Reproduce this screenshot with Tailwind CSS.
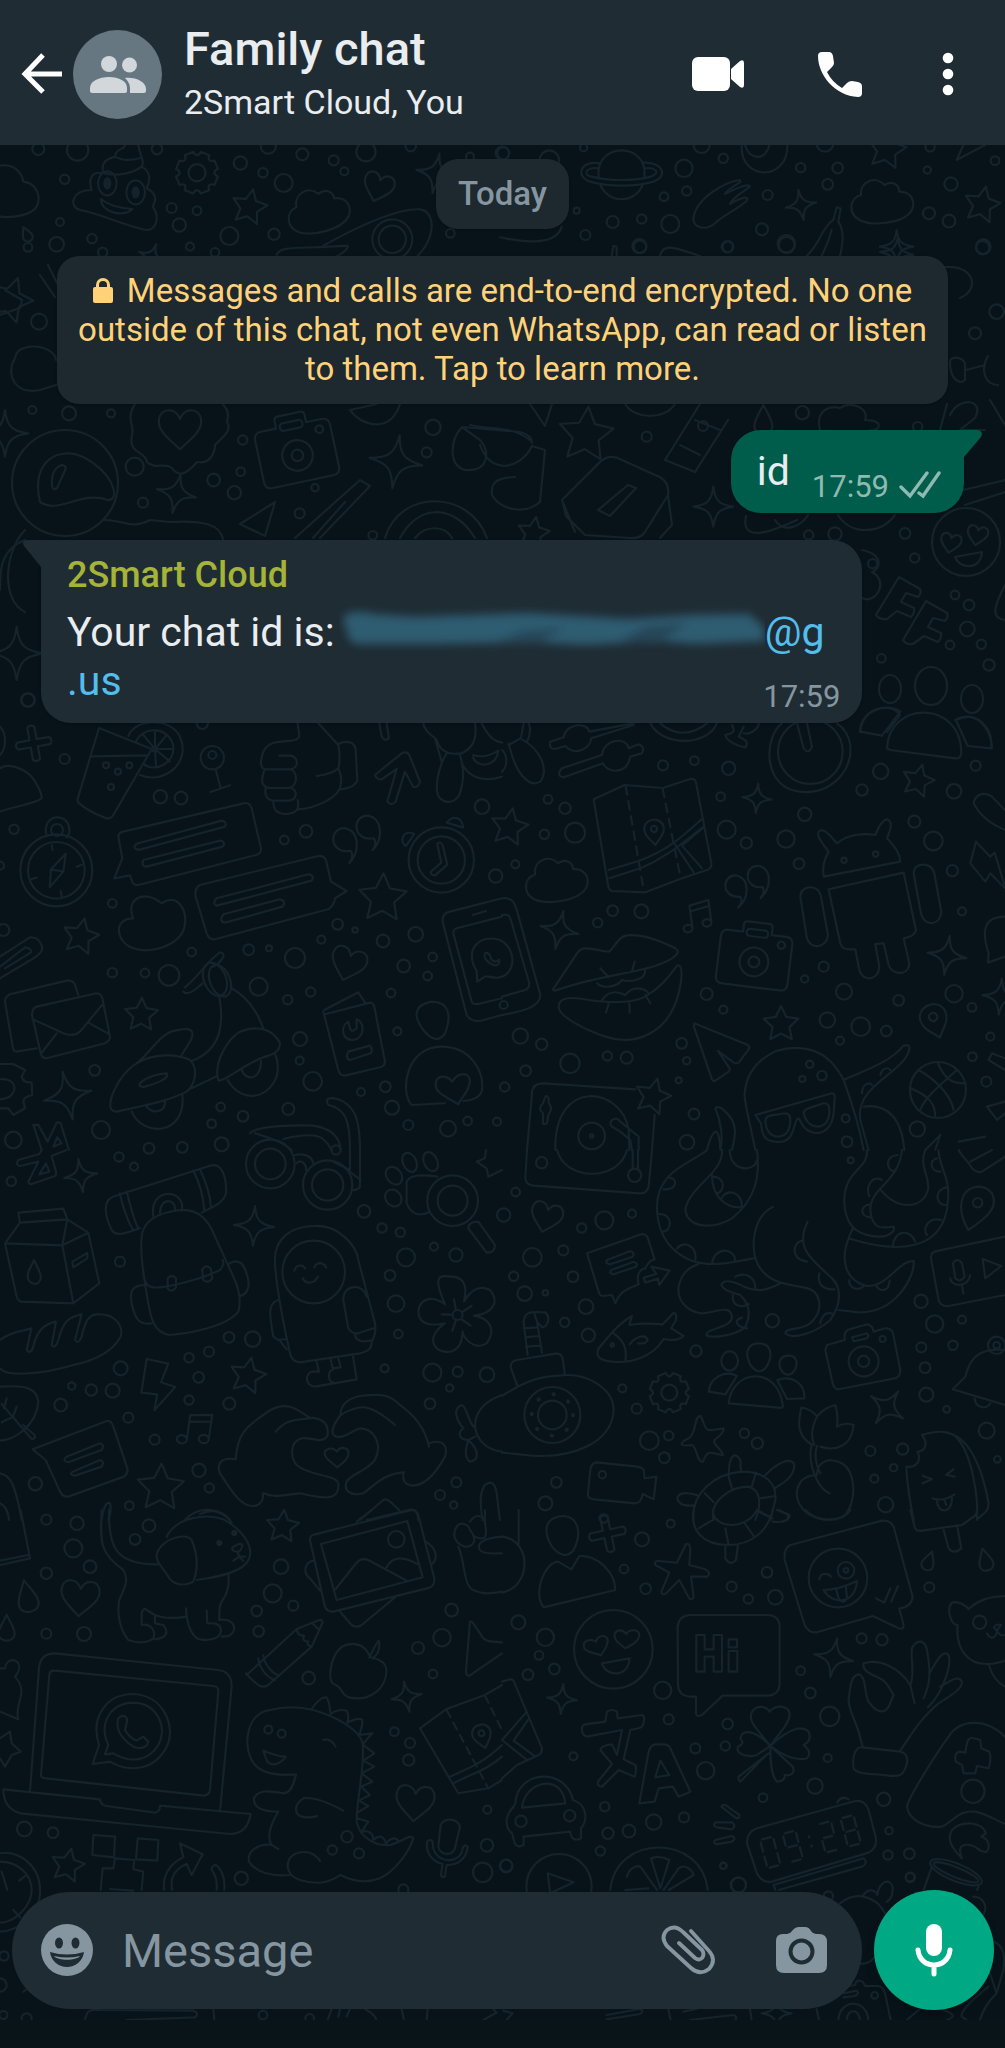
<!DOCTYPE html>
<html lang="en">
<head>
    <meta charset="UTF-8">
    <meta name="viewport" content="width=device-width, initial-scale=1.0">
    <title>Family chat</title>
    <script src="https://cdn.jsdelivr.net/npm/@tailwindcss/browser@4"></script>
</head>
<body class="bg-[#091419] font-['Roboto',sans-serif] text-[#e9edef]">

<div class="min-h-screen flex flex-col pb-7">

    <header class="relative z-10 flex items-center h-[145px] pt-[3px] pl-[19px] pr-[47px] bg-[#1f2c34]">
        <button type="button" aria-label="Back" class="shrink-0">
            <svg class="w-[46px] h-[46px]" viewBox="0 0 46 46" fill="none" stroke="#fff" stroke-width="5"><path d="M43 23H7M24 4 6 23l18 18"/></svg>
        </button>
        <span class="shrink-0 ml-2 w-[89px] h-[89px] rounded-full bg-[#667781] flex items-center justify-center">
            <svg class="w-[58px] h-[42px]" viewBox="0 0 58 42" fill="#d1d7db">
                <circle cx="20" cy="11" r="8"/><circle cx="40.500" cy="12" r="7.500"/>
                <path d="M1 35C1 28 10 24 20 24s18 4 18 11v3c0 1-1 2-2 2H3c-1 0-2-1-2-2z"/>
                <path d="M36 25c11-1 21 4 21 11v2c0 1-1 2-2 2H41V35c0-4-2-7-5-10z"/>
            </svg>
        </span>
        <div class="flex-1 min-w-0 pl-[22px]">
            <h1 class="text-[47px] leading-[56px] font-medium truncate">Family chat</h1>
            <p class="text-[34px] leading-[50px] truncate">2Smart Cloud, You</p>
        </div>
        <nav class="flex items-center shrink-0">
            <button type="button" aria-label="Video call">
                <svg class="w-[54px] h-[36px]" viewBox="0 0 54 36" fill="#fff"><rect x="1" y="1" width="38" height="34" rx="6"/><path d="M40 13 49 5q4-2 4 2v22q0 4-4 2l-9-8z"/></svg>
            </button>
            <button type="button" aria-label="Voice call" class="ml-[72px]">
                <svg class="w-[46px] h-[46px]" viewBox="0 0 46 46" fill="#fff"><path d="M5 1H12q3 0 4 4l1 7q0 2-2 4l-5 5q5 10 15 16l5-5q2-2 5-2l6 1q4 1 4 4v7q0 4-4 4C18 45 1 24 1 5q0-4 4-4z"/></svg>
            </button>
            <button type="button" aria-label="More options" class="ml-[75px]">
                <svg class="w-[20px] h-[46px]" viewBox="0 0 20 46" fill="#fff"><circle cx="10" cy="7" r="5.300"/><circle cx="10" cy="23" r="5.300"/><circle cx="10" cy="39" r="5.300"/></svg>
            </button>
        </nav>
    </header>

    <div class="relative flex-1 flex flex-col overflow-hidden bg-[#071318]">

        <!-- doodle wallpaper -->
        <svg class="absolute inset-x-0 top-0 w-full" viewBox="0 145 1005 1875" fill="none" stroke="#15232a" stroke-width="2.200" stroke-linecap="round" stroke-linejoin="round" aria-hidden="true">
            <defs>
                <path id="star" vector-effect="non-scaling-stroke" d="M0-10 2.800-4.100 9.500-3.100 4.600 1.500 5.900 8.100 0 5-5.900 8.100-4.600 1.500-9.500-3.100-2.800-4.100z"/>
                <path id="sparkle" vector-effect="non-scaling-stroke" d="M0-10C.8-3 3-1 10 0 3 1 1 3 0 10-1 3-3 1-10 0-3-1-.8-3 0-10z"/>
                <path id="heart" vector-effect="non-scaling-stroke" d="M0 9C-4 5-10 1-9-4-8-9-2-9 0-4 2-9 8-9 9-4 10 1 4 5 0 9z"/>
                <path id="cloud" vector-effect="non-scaling-stroke" d="M-13-4C-14-12-4-16 1-10 6-13 10-10 10-6 18-6 20 1 17 6 12 13-6 15-14 11-21 7-20-2-13-4z"/>
                <path id="gear" vector-effect="non-scaling-stroke" d="M1.800-9.800 5.700-8.200Q4.600-4.600 8.200-5.700L9.800-1.800Q6.500 0 9.800 1.800L8.200 5.700Q4.600 4.600 5.700 8.200L1.800 9.800Q0 6.500-1.800 9.800L-5.700 8.200Q-4.600 4.600-8.200 5.700L-9.800 1.800Q-6.500 0-9.800-1.800L-8.200-5.700Q-4.600-4.600-5.700-8.200L-1.800-9.800Q0-6.500 1.800-9.800zM4 0A4 4 0 1 1-4 0 4 4 0 1 1 4 0z"/>
                <path id="drop" vector-effect="non-scaling-stroke" d="M0-10C3-4 6 0 6 4 6 11-6 11-6 4-6 0-3-4 0-10z"/>
                <path id="camera" vector-effect="non-scaling-stroke" d="M-8-7H-4V-9Q-4-10-3-10H3Q4-10 4-9V-7H8Q10-7 10-5V6Q10 8 8 8H-8Q-10 8-10 6V-5Q-10-7-8-7zM4 1A4 4 0 1 1-4 1 4 4 0 1 1 4 1zM1.500 1A1.500 1.500 0 1 1-1.500 1 1.500 1.500 0 1 1 1.500 1zM8-4.500A1 1 0 1 1 6-4.500 1 1 0 1 1 8-4.500zM-2-8H2Q3-8 3-7T2-6H-2Q-3-6-3-7T-2-8z"/>
                <path id="plus" vector-effect="non-scaling-stroke" d="M-2-9Q0-11 2-9V-2H9Q11 0 9 2H2V9Q0 11-2 9V2H-9Q-11 0-9-2H-2z"/>
                <path id="note" vector-effect="non-scaling-stroke" d="M-4 7V-8L9-10V5M-4-4 9-6M-4 7A3 2.500 0 1 1-10 7 3 2.500 0 1 1-4 7zM9 5A3 2.500 0 1 1 3 5 3 2.500 0 1 1 9 5z"/>
                <path id="quote" vector-effect="non-scaling-stroke" d="M-5 9C-2 6-2 4-3 2-16 2-14-14-4-12 4-9 3 3-5 9zM10 4C13 1 13-1 12-3-1-3 1-19 11-17 19-14 18-2 10 4z"/>
                <path id="pin" vector-effect="non-scaling-stroke" d="M0 10C-4 5-8 2-8-3-8-13 8-13 8-3 8 2 4 5 0 10zM2.500-3A2.500 2.500 0 1 1-2.500-3 2.500 2.500 0 1 1 2.500-3z"/>
            </defs>

            <!-- top left: cloud, swirl face, avocado -->
            <g transform="scale(.3333)" stroke-width="6.500">
                <path d="M0 497C40 490 65 515 70 545 110 550 125 590 110 620 95 645 40 655 0 650M275 570C260 520 290 515 310 520 300 480 330 475 345 470 345 445 375 450 375 435M415 435C420 470 435 480 425 500 455 515 450 545 440 565 470 580 470 600 458 620 480 650 470 690 440 690 380 680 300 640 240 630 205 620 215 570 275 570M345 470C370 485 400 480 421 474M310 520C350 530 400 520 425 500M303 597C330 620 370 625 397 627 370 655 300 635 303 597z"/>
                <ellipse cx="322" cy="550" rx="28" ry="36"/><ellipse cx="407" cy="577" rx="28" ry="36"/><ellipse cx="322" cy="550" rx="9" ry="15" fill="#14222a"/><ellipse cx="407" cy="577" rx="9" ry="15" fill="#14222a"/>
                <path d="M830 765C840 735 900 748 1042 737 1050 745 1020 765 1000 775M970 737C1100 665 1200 625 1260 628 1310 635 1310 720 1240 780"/>
                <circle cx="1177" cy="718" r="60"/><circle cx="1177" cy="718" r="41"/>
            </g>

            <!-- top right: planet, comet, banana -->
            <g transform="translate(500 0) scale(.3333)" stroke-width="6.500">
                <path d="M296 530C285 425 445 425 433 530M300 552C325 615 405 610 428 555M300 490C240 480 225 530 270 545 330 562 410 560 460 545 505 530 490 485 430 488M296 505C260 500 245 525 275 530 330 545 410 542 452 530 485 520 465 500 434 505M725 435C720 545 865 545 862 435M735 435C750 485 800 480 808 435M720 540C680 545 590 590 580 655 580 685 620 695 650 665 680 640 700 635 738 605 750 590 735 585 690 612 695 595 730 575 750 560 748 550 720 560 675 582 680 570 710 555 722 545M1370 480 1390 435M1370 480 1455 435M920 768C965 725 960 690 1000 660L1010 622 1022 626 1015 665C1032 690 1030 730 1020 768M995 690C985 730 975 745 965 768M480 768C490 725 530 745 600 768M335 768 340 738 350 740 350 768M0 712C80 730 170 735 185 680"/>
            </g>

            <!-- flower badge, astronaut, shades, phones -->
            <g transform="translate(0 240)" stroke-width="2.200">
                <path d="M135 164C125 180 135 185 132 195 128 215 145 210 147 222 155 230 165 222 172 228 180 240 190 230 197 222 210 225 215 212 215 205 225 195 232 190 227 182 230 170 225 168 223 164"/>
                <path d="M400 164C390 195 360 185 350 170L377 164M530 164 545 186 552 164M625 164C635 180 665 180 675 164"/>
                <circle cx="65" cy="243" r="53"/><path d="M40 262C30 220 60 205 85 218 115 235 120 260 108 260 80 250 60 275 40 262zM52 240C52 230 62 220 66 228L57 248Q51 252 52 240zM105 280C125 280 130 290 150 280L170 282C205 280 220 285 223 299M25 290C5 310 0 360 25 372M240 284 275 262 265 296z"/>
                <path d="M462 187C450 200 448 225 465 230 490 232 490 210 480 200zM462 187 520 192Q532 195 532 203M470 185C490 190 510 185 530 200M480 205C490 235 520 230 532 206L545 210 540 262C525 275 500 270 492 255 490 240 500 238 515 237M295 298 360 240 370 246 320 298M313 298 345 262"/>
                <path d="M385 298C400 248 470 250 487 298M400 298C420 262 455 265 475 298M415 298C425 285 445 285 452 298"/>
                <path d="M562 260 600 222Q610 213 622 220L655 235Q670 240 668 255L645 292Q640 299 630 298L585 295 566 276zM598 270 628 245 636 248 610 276zM562 260 575 292M668 255 672 285 660 298"/>
                <path d="M700 164 665 220 695 232 728 180M695 180 720 190M680 205 700 215"/><circle cx="703" cy="186" r="5"/>
                <path d="M820 190C815 170 830 165 840 168 850 160 870 168 865 180 885 180 880 192 870 190M950 175C960 155 985 160 975 178L960 190H985M990 160 1005 185M955 252 1005 240M965 265 1005 252M25 300C0 310 0 330 0 350"/>
                <path d="M40 35 55 57M48 25 58 45M945 27C975 25 980 50 960 58M950 122C950 115 965 117 965 125V140C960 145 950 140 950 122zM966 130 985 125M988 116C980 130 985 145 998 145M0 75 20 68 22 60 5 50M15 118C18 100 55 105 56 120M15 118C5 135 15 155 40 150L56 145"/>
                <circle cx="966" cy="302" r="34"/><path d="M955 317 982 312C981 330 960 330 955 317zM746 276C740 305 775 290 797 280M775 280C785 295 802 285 808 275M838 275C850 295 880 295 895 275"/>
                <path d="M862 310C885 315 880 330 872 332 890 342 875 365 862 358M899 337 920 349Q922 353 918 357L906 353 901 362 914 368Q915 373 911 377L897 371 887 379Q880 380 876 375zM926 361 947 373Q949 377 945 381L933 378 928 387 941 393Q942 398 938 402L924 396 913 404Q906 405 903 400z"/>
                <path d="M1005 345C992 370 992 378 1005 380M940 190 947 164"/><ellipse cx="890" cy="449" rx="11" ry="14"/><ellipse cx="931" cy="446" rx="16" ry="19"/><ellipse cx="972" cy="459" rx="11" ry="14"/>
                <path d="M860 492C860 470 890 460 900 475L887 492M955 480C975 470 990 485 992 508"/>
            </g>

            <!-- drink, fist, bubbles, scooter, passport -->
            <g transform="translate(0 700) scale(.3333)" stroke-width="6.500">
                <path d="M297 84 455 147 340 345Q330 360 315 353 265 335 235 308 230 300 235 290zM273 169 440 166M385 108C405 55 510 50 540 110 575 190 490 255 420 225M408 125C430 75 510 80 520 140 525 185 470 220 430 192M465 147 465 92M465 147 500 105M465 147 520 147M465 147 510 185M465 147 468 200M465 147 430 105M647 208 662 265M632 276 690 256M0 205C20 190 60 200 90 225 110 245 125 280 125 295 110 310 40 320 0 335M0 80C20 100 20 145 0 165"/>
                <circle cx="637" cy="173" r="35"/><circle cx="637" cy="165" r="12"/><circle cx="464" cy="147" r="7"/>
                <path d="M893 70C895 100 910 118 875 122 830 125 805 125 790 155 780 185 778 208 800 208H870C900 205 895 167 870 167H838M795 208C780 240 785 262 810 264H865C895 260 895 215 870 208M797 264C792 290 805 302 825 302H865C890 300 895 275 875 264M820 302C820 335 835 342 860 342 890 340 900 325 893 300M895 328C950 325 1020 290 1022 255 1025 240 1025 225 1015 205 1000 220 975 225 950 228M955 70 1015 135C1020 160 1020 185 1015 205M1015 132C1040 120 1065 125 1067 150L1072 240C1065 262 1040 265 1015 270M1138 70 1145 110Q1155 125 1167 115L1160 70M1125 225 1205 160Q1220 152 1228 165L1260 245Q1255 265 1240 260L1215 215 1187 305Q1175 320 1162 305L1190 207 1145 238Q1130 240 1125 225z"/>
                <path d="M1270 70C1275 100 1305 110 1310 120 1320 155 1350 165 1385 160 1430 140 1430 100 1425 70M1340 160C1315 200 1300 270 1320 295 1340 315 1370 305 1380 280 1395 230 1390 200 1380 165M1385 190C1410 240 1460 245 1506 230M1420 165C1450 175 1475 165 1495 152 1490 200 1435 205 1420 175zM1305 115 1325 185M1445 70C1470 120 1490 125 1506 128"/>
                <path d="M370 395 730 310Q748 305 755 325L783 445Q785 460 765 466L415 555Q400 558 395 540L390 526 343 535 367 475 355 410Q355 398 370 395zM415 430 665 362Q682 365 675 380L420 449Q400 450 405 435zM430 480 660 422Q680 425 668 440L440 500Q422 500 430 480zM600 555 955 468Q970 465 978 480L993 545 1040 573 1005 595Q1003 615 985 628L645 718Q628 720 620 700L587 590Q583 565 600 555zM650 595 925 523Q945 525 935 542L650 617Q635 610 650 595zM670 643 840 598Q860 602 848 620L675 668Q655 665 670 643z"/>
                <circle cx="169" cy="511" r="108"/><circle cx="169" cy="511" r="85"/><circle cx="171" cy="390" r="18"/><path d="M140 408C120 340 215 330 208 400L200 412M197 461 190 515 149 562 153 508zM153 508 190 515M155 435 158 450M182 573 186 592M92 538 110 533M230 500 247 494"/>
                <circle cx="1324" cy="480" r="98"/><circle cx="1324" cy="480" r="71"/><path d="M1312 432Q1320 422 1328 435L1342 494 1305 526Q1290 525 1293 515L1324 488zM1340 368C1360 345 1385 350 1390 383zM1218 438C1198 430 1205 385 1243 402z"/>
                <path d="M0 770 90 712Q120 710 127 745 125 760 100 775L0 835M0 800 75 742Q95 745 93 757L15 805M400 655C375 600 430 565 485 610 530 580 560 625 555 670 550 735 450 765 400 745 345 725 340 655 400 655z"/>
                <path d="M50 1055Q40 1055 38 1040L15 905Q15 890 30 883L200 842Q220 840 225 855L235 885M50 1055 110 1045M110 920 290 880Q303 880 307 895L330 1010Q330 1022 315 1030L140 1075Q125 1075 122 1060L96 945Q96 925 110 920zM97 957 190 1000Q220 1012 240 995L306 915M170 1000 122 1062M265 968 328 1003"/>
                <path d="M555 862C605 820 620 785 660 757 685 760 660 790 640 800M550 875C565 890 590 865 608 850M695 865C740 890 770 930 790 985M658 890C672 970 665 1050 575 1083M410 1090C450 1060 480 1000 525 992 570 980 590 990 570 1025L545 1065M410 1090C460 1060 530 1060 570 1080 600 1110 580 1160 560 1175 500 1205 440 1215 350 1235 325 1235 330 1210 335 1190 350 1150 370 1115 410 1090zM420 1150C440 1130 480 1120 500 1120 510 1135 470 1150 435 1160 420 1162 415 1158 420 1150zM395 1235C430 1315 560 1305 547 1185M440 1220C460 1245 495 1235 495 1205M575 1165 648 1130M655 1142C640 1090 680 1020 720 995 770 975 820 985 840 1030 840 1060 810 1065 790 1072 720 1100 680 1142 655 1142zM683 1140C720 1205 800 1205 830 1130 835 1110 835 1080 825 1062M725 1110C740 1150 790 1135 782 1075"/>
                <ellipse cx="660" cy="842" rx="30" ry="50" transform="rotate(-22 660 842)"/><ellipse cx="645" cy="838" rx="33" ry="52" transform="rotate(-22 645 838)"/>
                <path d="M973 930 1075 877 1095 907M975 943 1110 908Q1120 908 1123 920L1155 1085Q1155 1098 1140 1102L1035 1127Q1020 1127 1015 1110L970 935M1045 965C1020 980 1025 1020 1060 1020 1095 1015 1095 965 1070 958L1070 985Q1055 1000 1050 985zM1045 1055 1110 1037Q1120 1050 1112 1060L1050 1080Q1035 1075 1045 1055zM1295 905C1350 905 1355 950 1335 1000 1315 1030 1290 1015 1270 990 1240 950 1240 915 1295 905zM1235 1215C1200 1180 1215 1040 1325 1040 1410 1040 1450 1110 1447 1165 1445 1190 1425 1200 1390 1203M1235 1215 1335 1210M1375 1213C1340 1190 1300 1180 1308 1145 1315 1125 1340 1125 1357 1145 1375 1115 1410 1115 1410 1145 1405 1180 1385 1190 1375 1213z"/>
                <path d="M1506 595 1350 635Q1325 640 1328 665L1400 945Q1412 965 1440 963L1506 945M1506 650 1370 685Q1360 688 1360 700L1415 905Q1420 915 1435 912L1506 895M1418 645 1458 633"/>
                <path d="M1432 845 1430 812C1390 750 1440 700 1500 720 1550 745 1550 820 1500 832 1480 838 1465 825 1455 830zM1455 762C1460 755 1470 762 1472 772 1475 785 1485 788 1498 780 1500 795 1490 800 1475 793 1460 785 1450 772 1455 762z"/>
                <path d="M0 1092H40L75 1110 65 1130Q70 1150 95 1147L97 1185Q70 1190 70 1205L75 1225 40 1245 25 1225 0 1225M0 1138C55 1130 60 1195 0 1198M100 1275 125 1350M100 1275 115 1275 143 1325 170 1268Q185 1265 185 1280L207 1350M160 1340 172 1312 185 1330zM750 1300C770 1275 900 1275 940 1277 990 1285 1020 1310 1022 1350M765 1300C830 1320 850 1330 875 1350M850 1317C900 1305 950 1300 970 1318 990 1335 990 1345 995 1350M985 1215C970 1190 1000 1190 1030 1205 1065 1225 1080 1260 1080 1350M985 1215C1040 1225 1050 1270 1050 1350"/>
            </g>

            <!-- sliders, map, robot, lips, record player -->
            <g transform="translate(502 700) scale(.3333)" stroke-width="6.500">
                <path d="M145 125 185 112C190 70 255 65 262 95L395 70M145 125Q140 148 160 147L190 138C220 170 265 145 268 115L395 75M180 205 300 165C305 115 375 110 380 145L410 133Q430 140 420 160L385 170C375 225 315 220 303 190L185 232Q160 228 180 205zM445 70C480 140 615 140 645 70M475 70C520 110 570 105 615 70M65 70C60 90 60 110 55 115 120 150 140 210 115 245 80 265 40 220 20 130M55 115 20 135M0 150C20 170 15 200 0 215M80 70C90 95 80 115 75 125M690 75C700 95 695 100 670 105 675 125 710 140 730 142 740 130 735 120 710 110L725 80M770 70C770 90 740 105 725 100M885 70 905 145Q920 165 930 140L915 70"/>
                <path d="M840 70C790 105 780 240 870 270 970 300 1055 220 1045 135 1040 100 1020 80 1005 70"/><circle cx="925" cy="155" r="97"/>
                <path d="M1075 95C1080 30 1150 5 1195 35L1140 107zM1155 145C1160 0 1380 0 1378 160Q1375 178 1360 175L1165 150zM1362 60C1420 30 1475 80 1468 145L1397 138zM275 298 368 255 482 264 565 237Q580 235 582 248L628 490Q630 505 615 510L540 535 430 577 330 573Q320 570 318 555zM320 510 410 483C500 450 540 410 602 355M322 535 415 505C500 470 550 420 605 380M517 430 575 517M540 437 600 505M540 437 605 382"/>
                <path d="M371 258 425 570M482 266 535 530" stroke-dasharray="26 20"/>
                <path d="M965 530C960 500 965 480 980 455 945 410 940 395 960 390 980 395 990 415 1005 430 1040 400 1090 400 1120 405 1130 380 1140 360 1155 358 1175 365 1165 390 1155 415 1180 440 1195 465 1195 485zM980 568 1205 518 1242 690Q1240 710 1205 715L1222 790C1220 830 1170 825 1160 795L1145 730 1120 732 1132 800C1130 845 1080 845 1072 810L1060 748H1040Q1020 748 1015 730zM895 590C895 555 950 550 957 590L978 705C975 745 925 750 915 715zM1235 520C1235 485 1290 485 1297 520L1318 635C1315 680 1265 680 1257 640z"/>
                <circle cx="1026" cy="481" r="8"/><circle cx="1121" cy="462" r="8"/>
                <path d="M155 865 225 760Q235 745 250 745C280 745 300 755 320 755 335 750 345 710 375 706 420 702 480 725 520 745 535 755 525 765 510 775 440 820 300 820 160 872Q150 872 155 865zM170 920C170 890 210 890 260 900 330 910 390 910 430 890 480 860 500 830 525 797 545 790 540 840 530 880 500 1000 400 1040 310 1010 250 990 170 950 170 920zM295 805 320 832M390 815 398 785M285 850C300 865 340 865 360 840M360 840C380 845 430 845 430 810M300 900C320 870 350 875 370 885 390 860 420 860 438 878M320 912 312 937M382 910 383 938M430 885 445 910M577 970 738 1035Q745 1042 740 1048L710 1088Q702 1092 695 1088L648 1053 683 1105Q685 1110 680 1115L640 1142Q632 1145 630 1138L575 978z"/>
                <path d="M90 1180Q90 1150 125 1150L400 1168M75 1350 90 1180M458 1245 450 1350M160 1350C155 1130 360 1160 380 1290L382 1350M130 1190Q135 1185 140 1195V1210Q155 1225 140 1242L135 1270Q125 1275 123 1270V1240Q105 1225 123 1210zM330 1260Q345 1250 355 1265L410 1310V1350M330 1260Q320 1270 330 1280L355 1295 385 1320 390 1350"/>
                <circle cx="269" cy="1308" r="40"/><circle cx="269" cy="1308" r="5"/><circle cx="1308" cy="1170" r="84"/><path d="M1250 1110C1320 1150 1350 1200 1355 1230M1225 1165C1290 1190 1300 1220 1300 1252M1308 1090C1330 1140 1350 1150 1390 1150M1365 1110C1310 1160 1270 1190 1255 1230"/>
                <path d="M760 1350C740 1250 725 1200 728 1180 735 1095 810 1035 900 1045 960 1050 1000 1090 1025 1140 1090 1110 1160 1090 1205 1037 1230 1030 1225 1050 1210 1075 1170 1130 1060 1170 1075 1260L1100 1350M1025 1140C1050 1210 1070 1270 1085 1350M1085 1220C1160 1210 1200 1260 1207 1350M760 1245 990 1180Q1000 1180 998 1195L995 1240C985 1310 930 1310 905 1280L890 1255C875 1255 880 1320 840 1325 790 1330 780 1310 777 1270zM790 1265Q790 1250 805 1247L850 1240Q865 1240 865 1260 865 1305 830 1310 795 1310 790 1265zM905 1240Q905 1230 920 1225L965 1210Q980 1208 982 1225 985 1275 950 1280 915 1280 905 1240zM1080 1180C1080 1150 1105 1145 1110 1155M1135 1125C1140 1105 1155 1100 1165 1110M640 1225Q650 1215 670 1235C710 1270 700 1310 690 1350M640 1225C655 1260 665 1310 655 1350M615 1350C625 1310 650 1250 655 1350M1270 1350 1315 1305 1300 1350M1370 1325 1450 1310M1509 1205 1455 1220 1485 1260 1509 1240"/>
                <path d="M1415 310C1420 280 1450 275 1470 290L1509 330M1415 310C1430 340 1460 370 1509 390M1422 425 1465 470 1478 458 1509 560M1422 425 1405 490 1450 545 1465 520 1509 565M1509 650C1440 650 1440 700 1460 760L1458 788 1509 770M1509 1075 1470 1060 1460 1080 1509 1110M0 595C40 590 40 620 50 650L115 885C115 925 50 935 0 945M0 645Q20 640 25 655L82 850Q82 865 70 870L0 890"/>
            </g>

            <!-- milk, backpack, penguin, bread, hands -->
            <g transform="translate(0 1150) scale(.3333)" stroke-width="6.500">
                <path d="M125 0 118 12 55 30Q45 45 60 48L115 35 85 95Q88 105 95 102L165 78Q170 72 168 65L155 18 200 0M138 40 148 65 118 73zM15 280 60 218 55 188 190 176 202 208 265 248 298 400 220 460 62 455Q52 450 50 440zM15 280 187 286 220 460M187 286 202 208 60 218M187 286 265 248M217 335 262 309V325L220 352zM102 330C115 360 125 370 122 385 118 410 85 405 83 380 82 360 95 350 102 330z"/>
                <path d="M0 570C40 540 70 545 94 535L80 600Q92 615 100 590C110 540 140 520 168 515L155 585Q165 600 175 570C190 510 210 500 245 493L225 570Q235 585 245 560C255 515 265 495 290 493 350 490 370 530 362 560 340 600 290 630 220 645 120 675 20 680 0 655M345 138 630 47C670 35 680 90 678 130 670 160 640 170 605 188M345 138C300 150 320 210 335 240 350 260 370 252 420 235M360 130C365 160 385 220 400 240M380 125C390 160 400 210 415 235M580 62C600 100 610 140 613 182M600 58C615 90 630 130 633 170M460 200C445 110 560 115 545 182M480 190C480 140 530 145 525 182"/>
                <path d="M425 260C430 200 500 185 540 180 600 175 630 220 645 260L700 380C725 430 720 470 715 485 680 530 570 550 510 555 460 550 450 500 440 430 430 370 420 310 425 260zM430 370C435 410 450 415 480 412 540 405 620 380 660 360 670 350 672 335 668 330M503 385Q515 370 528 385V412Q515 430 503 415zM606 358Q618 342 632 355L637 385Q625 402 610 390zM438 405C390 405 390 430 395 460 405 510 420 525 455 520M685 342C720 320 735 345 745 390 750 420 735 435 720 438"/>
                <path d="M825 340C820 260 880 228 945 228 1020 225 1070 290 1075 330L1125 520Q1130 550 1115 575C1115 600 1100 605 1080 610L900 637Q875 635 870 610C850 520 830 420 825 340zM1030 450C1030 400 1090 400 1100 440M1030 450 1045 535Q1055 552 1075 550L1120 535M1065 555C1070 580 1100 575 1118 570M835 450C800 460 810 500 820 560L835 570 860 567M838 570 860 598M950 635 957 665 935 665C915 675 915 705 945 710L1070 688 1058 612M992 628 998 655 1022 652 1015 625M1000 658C980 665 985 695 1000 698M883 362C890 340 910 345 915 355M943 352C950 335 970 335 978 352M908 385C920 405 945 400 954 380"/><circle cx="941" cy="366" r="94"/>
                <circle cx="811" cy="42" r="73"/><circle cx="811" cy="42" r="46"/><circle cx="983" cy="105" r="74"/><circle cx="983" cy="105" r="47"/><path d="M885 15C910 10 935 15 940 40M890 40C905 25 920 45 918 60M1050 0V60L1000 35M1080 0V110Q1075 120 1055 120M1030 50 1082 90"/>
                <circle cx="1358" cy="152" r="76"/><circle cx="1358" cy="152" r="45"/><path d="M1312 80C1280 75 1230 70 1220 95L1220 160C1235 195 1260 200 1290 185M1405 235Q1405 215 1435 215L1485 285Q1485 310 1460 308zM1405 235 1460 308M1430 35 1455 25 1458 0M1430 35 1460 55 1465 80 1506 60"/>
                <ellipse cx="1182" cy="77" rx="22" ry="29" transform="rotate(-38 1182 77)"/><ellipse cx="1229" cy="37" rx="20" ry="30" transform="rotate(-25 1229 37)"/><ellipse cx="1292" cy="35" rx="20" ry="30" transform="rotate(-25 1292 35)"/><ellipse cx="1180" cy="144" rx="23" ry="27" transform="rotate(-40 1180 144)"/>
                <path d="M1335 462C1290 360 1330 380 1360 380 1400 385 1400 420 1392 455 1420 405 1450 410 1470 420 1500 455 1480 490 1422 497 1470 505 1490 540 1460 580 1420 605 1390 560 1388 545 1385 620 1330 610 1310 595 1280 565 1320 530 1335 520 1260 535 1250 500 1258 470 1275 435 1310 445 1335 462zM1362 448 1368 480M1415 468 1388 485M1325 493 1355 494M1412 527 1385 508M1357 542 1367 513"/><circle cx="1373" cy="495" r="15"/>
                <path d="M440 627 505 641 483 697 526 711 463 781 472 733 424 728zM0 710C80 705 110 715 115 755 110 830 40 870 0 872M5 762 95 867Q110 865 103 855L70 825M20 745 12 775M50 770 38 802M5 817 40 800M98 898 320 813Q335 812 340 830L382 955Q385 970 372 980L205 1040Q190 1042 180 1025L137 930zM200 920 300 880Q315 885 305 900L205 937Q185 933 200 920zM218 965 300 930Q315 935 305 950L225 977Q205 975 218 965z"/>
                <path d="M707 928C712 850 740 830 790 795 850 745 890 775 928 803 980 805 985 830 983 855 970 885 935 860 905 865 870 875 870 920 890 945 930 980 1000 970 1015 1000 1020 1050 980 1050 900 1030 850 1035 820 1045 792 1030M707 928C660 920 650 945 660 970 690 1015 720 1070 760 1068 780 1068 793 1050 788 1030M827 845C850 820 860 810 928 805M1022 795C1020 770 1040 745 1080 738 1150 730 1170 735 1200 765 1240 795 1275 830 1287 890M1287 880C1330 865 1345 890 1335 920 1305 975 1275 1005 1240 1007 1215 1005 1205 990 1212 967 1150 970 1120 1010 1090 1030 1050 1040 1030 1020 1040 995 1055 970 1100 965 1125 930 1150 880 1120 835 1080 835 1050 845 1035 865 1010 860 990 855 995 830 1022 795 1080 760 1110 760 1185 825M1012 952C985 930 970 920 975 905 985 890 1005 895 1010 905 1025 885 1050 895 1045 915 1040 935 1025 940 1012 952z"/>
                <path d="M1506 735C1450 755 1425 790 1425 830 1430 870 1460 900 1506 905M1420 830C1400 800 1400 770 1385 765 1360 775 1365 805 1390 835 1370 850 1380 870 1405 870L1425 860M1405 872C1395 900 1395 925 1410 935 1440 930 1435 900 1410 875M0 970C30 975 45 1000 65 1110M0 1060C20 1070 25 1090 27 1110M305 1110C310 1070 320 1055 330 1060 335 1075 330 1100 325 1110M555 1110C600 1060 670 1080 690 1110M1080 1110 1150 1050Q1160 1045 1170 1055L1198 1080M1100 1110 1235 1078Q1255 1080 1255 1110M1448 1110C1435 1040 1445 1000 1470 998 1495 1000 1490 1050 1500 1110"/>
            </g>

            <!-- octopus, fish, submarine, plant, popsicle -->
            <g transform="translate(502 1150) scale(.3333)" stroke-width="6.500">
                <path d="M75 0 70 85Q72 105 95 107L415 130Q435 130 440 110L450 0M165 0C190 95 350 95 375 0M392 0V58M408 0V58"/><circle cx="398" cy="76" r="20"/>
                <path d="M615 0C570 40 460 60 465 180 470 290 550 345 640 342 690 340 720 330 757 325M660 0C665 70 560 110 550 180 560 240 640 235 690 205 760 150 775 80 765 0M630 75C630 140 670 175 722 172M813 170C750 200 740 310 775 355 800 390 830 400 905 412 960 420 965 480 930 515 900 545 850 530 850 550 870 570 940 550 985 510 1020 460 1020 410 985 380 920 320 880 290 917 215M835 400C790 425 760 425 730 412 700 395 665 385 658 405 665 425 700 430 715 435 745 465 745 500 730 530 700 560 620 565 613 555 610 535 690 535 690 500 685 460 640 490 595 490 550 480 525 450 530 410 540 360 570 350 590 342M1095 0C1100 60 1025 60 1027 155 1030 240 1080 260 1140 260 1170 255 1180 240 1175 230 1140 235 1110 240 1105 180 1105 110 1190 100 1200 0M1270 0C1250 50 1285 80 1278 120 1260 180 1185 180 1135 118M1310 0C1310 50 1345 80 1338 150 1330 310 1180 310 1040 265M1053 235C1000 340 1040 395 1095 408 1160 410 1190 330 1235 333 1240 380 1180 490 1070 487L1010 480"/>
                <path d="M683 0C685 70 760 65 765 30M500 82C530 85 525 120 485 118M470 192C515 190 510 245 482 245M525 295C550 270 585 290 580 330M630 342C635 290 700 290 700 335M632 80C670 80 670 125 645 130M657 148C670 115 720 120 720 172M903 272C870 275 865 330 915 335M952 370C945 400 960 420 998 418M955 520C960 490 980 485 992 492M700 380C730 365 760 380 760 415M692 435C690 470 720 475 740 462M735 535C700 530 695 510 720 503M1140 90C1110 75 1090 110 1102 138M1188 15C1150 15 1150 60 1178 65M1105 163C1075 165 1070 200 1108 203M1305 25C1280 30 1285 65 1315 65M1335 112C1300 115 1295 165 1333 165M1318 210C1280 200 1260 235 1275 255M1240 275C1225 235 1175 240 1173 290M1042 390C1040 415 1070 425 1085 408M1122 405C1130 425 1160 430 1163 392"/>
                <path d="M255 310 420 252Q433 252 438 265L458 328C440 330 435 345 430 355 405 360 405 385 410 403 380 415 355 420 340 460L330 435 300 438Q292 435 290 425zM315 330 385 303Q400 308 392 320L325 343Q308 340 315 330zM328 360 395 335Q410 340 402 350L335 373Q318 370 328 360zM425 383 463 372 448 350 503 362 472 405 468 386 430 398zM290 595C320 560 350 520 390 498L382 525C410 520 450 520 482 523L515 488Q525 490 522 510L508 535 545 558C530 572 510 572 485 567 450 625 380 640 330 635 290 630 280 620 290 595zM335 550C370 575 375 600 370 635M383 583C400 560 430 550 437 570 430 585 415 580 408 580"/><circle cx="331" cy="585" r="5"/>
                <path d="M0 738C60 700 100 680 170 677 260 665 335 720 335 780 330 880 210 925 90 917L0 908M27 655Q22 635 45 630L165 610Q180 612 183 630L188 672M27 655 45 705M77 615 65 520C65 480 90 487 130 487 145 500 140 530 120 532L105 515 120 608M65 535 105 532M70 562 110 558M72 590 115 587M97 490 105 515"/><circle cx="151" cy="795" r="84"/><circle cx="151" cy="795" r="43"/><circle cx="151" cy="795" r="62" stroke-dasharray="1 48" stroke-width="12"/>
                <path d="M265 960 258 1030Q255 1045 275 1048L400 1060Q418 1060 422 1032L455 1048 463 980 428 985 425 960Q420 952 405 950L285 937Q268 937 265 960z"/><circle cx="301" cy="974" r="11"/>
                <ellipse cx="683" cy="633" rx="25" ry="29"/><path d="M770 580C810 580 815 620 790 655 775 670 760 665 745 645 725 605 740 580 770 580zM858 617C890 615 890 650 870 670 855 680 840 670 833 650 830 630 840 618 858 617zM620 725C625 680 670 660 705 678L670 733zM680 760C690 655 830 645 843 770Q840 775 830 773zM826 690C870 675 910 700 907 745L855 747zM595 797C610 820 605 845 630 840L665 835C665 850 655 855 640 868 625 880 665 900 662 915 630 915 620 890 603 935 585 940 585 890 570 885 530 890 530 880 560 865 585 850 575 800 595 797z"/>
                <path d="M575 1110C565 1030 640 970 720 965 790 965 825 1000 820 1050L805 1110M635 1110C620 1050 690 1010 740 1010 775 1020 780 1060 760 1110M690 1015 680 980C680 910 700 905 715 930L717 965M750 1008 762 968M790 975C830 935 870 920 877 945 875 990 830 1005 818 1015M775 1045 820 1038M768 1085 805 1102M635 1057 608 1030M590 1037C540 1020 520 1035 528 1052 540 1070 560 1067 580 1067M825 1080 860 1095 855 1110M930 885C880 855 890 810 898 773 920 775 940 790 945 800 960 780 980 770 1000 765 1008 790 1008 810 1005 830 1020 820 1040 820 1055 825 1050 890 1000 905 955 890M945 800C925 840 930 870 937 885M928 890C920 930 930 960 945 990 955 1010 970 1025 983 1030M945 888C935 920 945 950 955 970M940 975C880 980 870 1040 905 1080 940 1115 1000 1115 1030 1095 1070 1040 1055 960 1020 940 980 920 945 935 945 975"/>
                <path d="M1260 855C1310 840 1350 840 1370 870 1410 920 1430 1040 1425 1110M1330 848C1400 855 1440 950 1460 1060 1460 1085 1445 1090 1430 1105M1260 855C1280 880 1270 905 1247 905 1260 935 1240 955 1213 950 1215 1000 1225 1060 1235 1110M1262 977 1290 988 1262 1000M1355 958 1332 975 1358 980M1292 1045C1320 1055 1340 1045 1358 1033M1305 1052C1305 1090 1350 1095 1350 1045M1328 1052 1333 1065"/>
                <path d="M975 585 1028 570Q1025 540 1045 537L1095 523Q1112 525 1115 545L1150 535Q1170 535 1173 550L1195 660Q1195 680 1180 685L1010 718Q998 718 992 700L970 600zM1050 562 1095 550Q1105 560 1092 566L1055 574z"/><circle cx="1085" cy="634" r="45"/><circle cx="1085" cy="634" r="17"/><circle cx="1142" cy="567" r="9"/>
                <path d="M1509 260 1310 302Q1285 305 1287 325L1310 450Q1315 470 1340 468L1509 435M1442 327 1498 348 1450 385zM1353 340Q1365 320 1380 340L1388 380Q1375 400 1360 385zM1345 385C1350 415 1400 410 1405 375M1380 405 1384 430M1399 240C1375 200 1375 170 1380 150 1390 110 1440 95 1470 130 1490 170 1460 200 1399 240zM1509 600C1420 590 1400 640 1390 680L1352 718 1509 765M1418 745C1420 775 1455 780 1465 760M1370 0C1380 20 1400 35 1410 55Q1425 70 1440 65L1509 20M1405 35 1470 0"/><circle cx="1427" cy="158" r="14"/><circle cx="1484" cy="586" r="26"/><circle cx="1484" cy="586" r="10"/>
            </g>

            <!-- dog, laptop, dinosaur, pencil, apple -->
            <g transform="translate(0 1510) scale(.3333)" stroke-width="6.500">
                <path d="M62 0 90 145 0 165M85 135 0 152M305 0C300 100 300 130 370 180 390 210 370 240 358 270 350 310 360 360 385 390 410 400 440 400 460 385 470 360 450 340 425 345V310Q430 290 440 300L465 315V340L490 345C510 370 495 385 465 388M327 0C325 110 345 165 475 163M500 80C530 20 620 10 670 28 730 60 765 115 745 150 730 185 660 200 590 210M475 120C500 80 560 70 575 90 600 150 590 190 580 215 550 230 520 225 505 200 480 160 460 150 475 120zM465 315C490 325 530 325 560 320M558 295C560 350 580 385 600 388 650 395 670 375 660 350 650 338 640 340 622 340L620 302M685 193C690 230 680 255 665 275 655 290 660 315 657 330 690 325 705 340 702 360 695 380 680 380 665 380M600 12C630 0 660-5 695 37M697 113C710 105 725 95 727 107 725 120 715 128 712 125 700 125 695 120 697 113M713 127 718 140 700 152M718 140 730 152M722 140 735 140"/><circle cx="658" cy="99" r="6" fill="#14222a"/><circle cx="703" cy="69" r="6" fill="#14222a"/>
                <path d="M930 90Q928 78 945 73L1235 0Q1250 0 1255 15L1303 205Q1305 225 1290 233L1000 305Q980 305 975 290zM963 102 1222 33 1268 202 1010 270zM1007 237 1070 158Q1085 142 1105 150L1222 213M1158 175C1180 130 1220 145 1255 163M1278 95C1310 115 1315 145 1297 162M940 152C910 160 910 190 930 205L963 245M1020 305 1055 345Q1070 355 1085 345L1185 262M1070 35 1115 0"/><circle cx="1189" cy="88" r="25"/>
                <path d="M740 495 890 357 958 330Q970 328 967 340L935 410 805 525Q790 535 775 525 750 505 738 490zM890 357Q893 378 912 377 905 395 925 395 918 405 935 410M937 340 958 360M775 445C780 480 805 505 825 510M790 437C795 465 815 490 838 497M1108 443C1125 410 1130 395 1137 392 1140 410 1140 430 1118 445M1110 440C1090 390 1030 390 1005 435 990 465 985 510 1000 522 1030 530 1020 555 1050 563 1090 570 1110 560 1130 545 1160 520 1170 470 1145 455 1130 445 1120 445 1110 440z"/>
                <path d="M90 845 117 475Q120 430 165 430L655 480Q695 485 695 530L660 905M123 795 148 495Q150 480 165 482L640 528Q657 530 655 545L630 840Q628 855 612 857L138 805Q122 805 123 795zM10 838 300 868Q300 885 320 888L465 908Q480 905 480 887L752 912C745 955 720 972 690 972L60 910Q10 895 10 838zM278 762 297 705C270 620 320 552 400 552 490 555 530 650 500 710 465 780 390 790 330 755zM315 733 325 705C295 640 330 580 400 578 470 580 505 650 475 705 445 755 390 760 340 730zM355 625C370 610 385 620 380 640L375 660Q390 685 410 692L430 680 445 695C440 715 420 718 400 710 370 690 345 660 355 625z"/>
                <path d="M888 793C810 800 770 780 755 750 730 700 740 610 810 600 850 590 900 590 940 600 1010 620 1080 660 1088 700 1095 780 1070 860 1070 935 1080 985 1130 1010 1170 1005 1210 995 1230 970 1240 985 1230 1020 1190 1080 1140 1105 1100 1120 1060 1115 1022 1095 985 1120 950 1125 900 1110 850 1095 855 1040 890 1030 920 1020 945 1030 960 1053M888 793C880 830 870 850 850 850 820 845 775 835 762 865 760 895 790 905 835 905 810 945 800 985 815 1005L835 1017M815 1005C780 1000 740 1020 747 1055 770 1090 820 1100 868 1095M1030 902C980 875 940 860 910 865 880 885 885 910 900 918 920 925 940 922 952 918M970 690C985 685 1000 695 1007 710M790 722C800 750 800 765 825 763 845 758 855 745 857 740 840 740 810 730 790 722zM935 597C950 575 965 560 980 562 990 580 990 600 992 612 1010 598 1025 598 1040 602 1048 620 1045 625 1042 638 1060 630 1075 622 1087 630 1088 655 1080 665 1078 675L1117 670 1088 703 1123 730 1090 752 1123 770 1085 790 1117 815 1083 830 1110 855 1077 872 1105 888 1072 908M1072 925 1105 935 1085 965C1105 960 1120 970 1120 990 1135 975 1150 975 1158 1000 1170 985 1185 980 1195 992"/>
                <path d="M1410 335Q1415 333 1420 340L1450 385Q1460 395 1480 395L1506 397M1410 335 1398 485Q1400 502 1412 495L1506 430M1260 655 1340 597 1455 555 1506 525M1260 655 1375 850 1465 835 1506 810M1350 800C1420 770 1460 750 1506 705M1360 820C1430 785 1460 780 1506 740"/><path d="M1340 600 1465 835M1455 557 1506 660" stroke-dasharray="24 18"/>
                <path d="M1322 945C1330 925 1370 920 1380 950L1365 1015C1355 1040 1320 1035 1315 1010zM1282 995Q1290 985 1298 995C1295 1065 1385 1065 1388 1015Q1395 1000 1403 1010C1400 1050 1370 1065 1340 1065L1335 1100Q1325 1105 1323 1095L1328 1062C1295 1055 1275 1025 1282 995zM1370 50C1380 35 1405 40 1410 60 1435 90 1420 110 1395 110 1365 100 1355 75 1370 50zM1410 35C1430 5 1455 20 1455 40 1465 90 1450 90 1425 80M1455 40V0M1375 110C1395 150 1390 230 1420 240 1450 255 1480 250 1506 245M1506 80C1440 85 1430 105 1440 120 1450 135 1490 130 1506 130"/>
                <path d="M0 475H15C20 440 60 445 58 475 55 490 50 495 45 500 90 550 40 580 55 628L0 605M0 685 30 665 35 700 62 725 35 735 15 770 0 745M280 975 345 980 342 1042 277 1035zM413 985 475 990 472 1052 408 1048zM345 1045 403 1050 400 1078 430 1085 425 1140M345 1045 340 1075 308 1075 302 1140M330 1137 400 1142M540 1000 608 1033 575 1095 560 1062C520 1080 510 1110 517 1140M540 1000 550 1042C510 1060 485 1100 493 1140M635 1075Q645 1055 658 1075C670 1090 675 1110 673 1140M635 1080C650 1100 652 1120 650 1140M0 1030C60 1020 120 1070 120 1140M0 1055C50 1055 95 1090 95 1140M58 1112 75 1098M5 1085 22 1140"/>
            </g>

            <!-- smileys, Hi bubble, translate, car, clock, gamepad -->
            <g transform="translate(502 1510) scale(.3333)" stroke-width="6.500">
                <path d="M185 18C230 20 240 70 215 120 195 145 170 135 150 110 120 60 130 20 185 18zM125 292C90 250 130 155 168 155L208 178 232 138C290 135 340 190 340 240zM50 0V100M0 80C90 90 90 230 0 248M575 0C565 60 600 105 680 105 750 105 800 60 812 0M632 0C635 60 735 60 765 0M590 55 635 28M680 105 670 55M755 78 728 40M812 25 765 0M812 35C850 40 865 25 862 15L830 0M670 105V145Q685 170 702 150L708 105M552 102Q565 98 565 120L562 165 610 178Q630 190 615 200L567 200 575 260Q570 275 560 262L532 210 490 252Q478 255 478 245L502 188 460 165Q455 152 470 153L525 158zM865 105 1140 32Q1165 30 1175 50L1232 260Q1230 290 1192 296L1205 345Q1205 360 1190 355L1113 318 945 367Q920 370 908 345L848 150Q845 115 865 105zM910 0C950 40 1020 40 1045 0"/>
                <circle cx="1008" cy="204" r="88"/><circle cx="1032" cy="181" r="25"/><circle cx="1032" cy="181" r="7"/><path d="M952 208C955 185 980 190 987 200M965 240C1000 240 1040 225 1065 213 1060 285 990 285 965 240zM1003 240 1010 265Q1025 285 1035 265L1032 232M1122 265 1147 278 1165 235M1168 275 1188 228"/>
                <circle cx="334" cy="418" r="118"/><path d="M300 460 383 445C380 505 310 500 300 460zM297 436C265 425 240 425 246 400 255 385 275 390 282 395 290 370 320 375 317 395 315 415 305 420 297 436zM370 415C350 400 335 390 338 372 345 355 365 360 373 372 380 358 410 355 412 375 410 395 390 405 370 415zM565 315H800Q833 318 833 350V525Q830 555 800 557H662L600 615Q583 622 582 610V560H565Q530 558 528 525L527 350Q530 317 565 315zM583 375H608V418H635V375H660V485H635V440H608V485H583zM680 388H705V412H680zM680 423H706V485H680z"/>
                <path d="M240 655Q240 645 250 643L310 635 315 605Q330 595 345 605L347 625 420 615Q430 618 425 635 425 650 410 655L385 660 365 748 400 765Q405 780 398 800L350 780 300 830Q285 828 288 815L330 762 295 720Q300 705 330 703L345 735 360 660 255 680Q238 675 240 655zM412 880 440 725Q445 705 460 703H485Q500 703 505 715L565 845 530 860 512 830 470 835 458 875zM475 752 502 795 460 802zM0 515 25 508Q35 508 38 520L120 715Q120 730 110 735L45 765 0 805M0 690 72 608M35 692 100 740M35 692 78 630M0 690 75 750M805 708C760 650 740 635 748 610 760 585 790 585 803 605 825 580 860 590 863 610 865 640 830 670 805 708 760 660 720 655 715 685 725 700 725 700 708 710 700 730 735 745 765 735L805 708C860 655 900 645 920 665 930 690 915 700 905 705 925 720 925 735 915 745 880 755 840 735 805 708 805 770 810 800 825 815 845 815 850 805 848 795 870 800 880 785 872 770L805 708M800 730 710 800Q708 810 715 815L790 738"/>
                <path d="M40 880C45 780 190 770 213 870 260 885 255 935 237 955V985C220 995 205 985 205 965L65 980V1005Q45 1015 38 1000L30 970C10 955 5 920 35 890zM60 893C70 810 180 790 190 880z"/><circle cx="57" cy="934" r="17"/><circle cx="203" cy="917" r="17"/><circle cx="171" cy="1130" r="98"/><path d="M137 1090 215 1117 145 1150zM658 890Q665 878 680 892L712 915Q715 928 700 923zM640 937H690Q705 950 690 958L645 952Q630 948 640 937zM640 990 690 978Q705 985 690 995L645 1003Q630 1000 640 990z"/>
                <path d="M325 1140C340 970 600 970 617 1140M375 1100C380 1075 405 1065 415 1070L465 1140M447 1045Q475 1035 502 1050L475 1135zM485 1140 530 1075C550 1060 570 1080 575 1095L500 1140M370 1140 440 1135M765 955 1060 873Q1090 870 1100 900L1122 985Q1125 1015 1100 1028L810 1115Q780 1120 765 1090L735 1000Q735 965 765 955zM1005 878Q1020 855 1040 868M815 1125 1085 1045Q1100 1060 1080 1070L830 1140M815 1125 820 1140"/>
                <path transform="translate(774 990) rotate(-15)" stroke-width="7" d="M7 0h26M40 8v28M40 52v28M7 88h26M0 52v28M0 8v28M77 0h26M110 8v28M110 52v28M77 88h26M70 8v28M77 44h26M145 28v3M145 56v3M187 0h26M220 8v28M187 44h26M180 52v28M187 88h26M257 0h26M290 8v28M290 52v28M257 88h26M250 52v28M250 8v28M257 44h26"/>
                <path d="M1082 710 1070 665C1055 620 1040 600 1040 570 1045 520 1050 495 1070 493 1095 500 1085 550 1100 575 1120 605 1145 615 1160 590L1175 555C1160 530 1150 510 1130 503 1100 490 1080 480 1085 460 1130 445 1190 470 1225 525 1240 490 1225 450 1230 415 1245 385 1270 390 1275 420 1290 500 1280 530 1265 565M1225 525 1238 580M1283 490C1310 440 1325 420 1340 435 1350 470 1320 550 1278 592M1315 530C1350 510 1370 495 1380 515 1380 540 1340 560 1310 580 1260 620 1230 670 1195 722M1055 775C1050 740 1060 710 1080 712L1195 725Q1220 730 1215 760C1205 800 1190 800 1160 797 1110 790 1065 795 1055 775zM1215 890C1220 860 1310 720 1340 680 1370 630 1450 620 1509 680M1215 890C1220 930 1270 955 1320 950 1360 930 1370 900 1420 905 1450 910 1480 930 1509 942M1395 700Q1400 680 1415 685L1435 690 1438 715 1462 725Q1470 745 1460 775L1425 768 1420 790 1385 790 1380 765 1362 755Q1355 735 1370 725L1390 728zM1380 1045C1345 1010 1335 985 1350 960 1380 930 1440 935 1452 970L1438 980C1460 985 1465 1010 1455 1025 1430 1030 1430 1010 1405 1005 1370 1000 1370 1020 1380 1045zM1265 1140 1290 1070M1430 1130 1425 1140"/><ellipse cx="1362" cy="1087" rx="83" ry="26" transform="rotate(22 1362 1087)"/><ellipse cx="1362" cy="1087" rx="72" ry="15" transform="rotate(22 1362 1087)"/><circle cx="1413" cy="844" r="35"/>
                <path d="M1225 0 1238 50Q1242 65 1260 62L1380 45 1422 15 1425 0M1325 60 1340 115Q1355 135 1378 115L1365 45M1400 297C1430 270 1460 260 1509 258M1400 297C1380 275 1350 270 1345 285 1335 310 1350 345 1367 345 1360 420 1400 465 1460 462 1480 462 1500 455 1509 452M1460 462C1470 500 1490 520 1509 530M1475 352Q1485 340 1497 345L1485 362zM1455 370C1465 390 1480 385 1485 365 1495 375 1500 378 1509 375"/><circle cx="1433" cy="337" r="20"/>
            </g>

            <!-- behind and under the message box -->
            <g transform="translate(0 1860) scale(.3333)" stroke-width="6.500">
                <path d="M120 90C125 150 60 215 0 215M95 90C95 140 40 190 0 188M40 150 60 172M255 480C260 450 270 448 300 450L580 452Q600 460 585 472L380 480M640 447 643 480M983 480 995 447M1020 447 1015 470M1050 447 1040 470M1095 447C1120 460 1125 470 1130 480M1205 447 1212 480M1283 447 1280 480M1480 447 1490 458 1450 480M1510 452 1538 460 1520 480M70 395 85 385"/>
            </g>
            <g transform="translate(600 1860) scale(.3333)" stroke-width="6.500">
                <path d="M720 130C770 90 830 110 855 160M790 105C810 80 830 95 832 105 840 60 870 55 878 80 880 110 870 120 860 125M740 300C790 320 810 310 825 290M735 380 765 375C770 355 790 360 795 378L835 378Q850 380 855 400L872 480M715 480C720 415 800 415 805 480M740 480C745 445 775 445 780 480M730 400 770 392Q780 400 765 408L730 412M1180 245C1215 255 1215 300 1210 330L1190 400 1170 340M1165 380C1130 410 1080 450 1085 470L1100 480M1190 400C1160 430 1150 450 1140 480M1120 110C1150 110 1165 140 1150 165M20 465 120 447Q135 455 120 462L20 478M205 447 212 480M250 455 290 447M270 480 400 465Q415 470 405 480M450 447 455 480M650 447 657 480M960 447 920 480M1030 450C1060 460 1070 470 1040 480"/>
            </g>

            <g id="doodles"></g>
        </svg>

        <main class="relative flex-1 flex flex-col pt-[14px] px-[41px]">
            <div class="self-center px-[22px] py-3 rounded-[22px] bg-[#1d282f] text-[#8696a0] text-[33px] leading-[46px] font-medium shadow">Today</div>

            <p class="mx-4 mt-[27px] px-5 pt-[15px] pb-4 rounded-[22px] bg-[#1d282f] text-[#ffd279] text-[33px] leading-[39px] text-center shadow">
                <svg class="inline-block align-[-2px] w-[20px] h-[27px] mr-[6px]" viewBox="1 0 20 27" fill="#ffd279"><path d="M4 10V8a7 7 0 0 1 14 0v2h1q2 0 2 2v12q0 2-2 2H3q-2 0-2-2V12q0-2 2-2zm3 0h8V8a4 4 0 0 0-8 0z"/></svg>
                Messages and calls are end-to-end encrypted. No one outside of this chat, not even WhatsApp, can read or listen to them. Tap to learn more.
            </p>

            <!-- sent -->
            <div class="relative self-end mt-[26px] flex items-end h-[83px] pl-[26px] pr-[23px] rounded-[30px] rounded-tr-none bg-[#005d4b] shadow">
                <svg class="absolute left-full top-0 -ml-px w-[20px] h-[32px]" viewBox="0 0 20 32" fill="#005d4b"><path d="M0 0H14q7 1 4 7L1 27V32H0z"/></svg>
                <span class="text-[41px] leading-[48px] pb-[18px]">id</span>
                <span class="ml-[22px] text-[31px] leading-[36px] pb-2 text-[#8ebab1]">17:59</span>
                <svg class="ml-[10px] mb-[14px] w-[42px] h-[30px]" viewBox="0 0 42 30" fill="none" stroke="#8ebab1" stroke-width="3.400" stroke-linecap="round"><path d="m2 18 9 9L28 4M20 24l4 3L40 4"/></svg>
            </div>

            <!-- received -->
            <div class="relative self-start mt-[27px] w-[89%] h-[183px] pl-[26px] pr-[22px] pt-3 rounded-[30px] rounded-tl-none bg-[#1f2c34] shadow">
                <svg class="absolute right-full top-0 -mr-px w-[20px] h-[32px]" viewBox="0 0 20 32" fill="#1f2c34"><path d="M20 0H5Q-1 1 2 6L19 27v5h1z"/></svg>
                <h2 class="text-[36px] leading-[46px] font-medium text-[#a5b337]">2Smart Cloud</h2>
                <p class="mt-2 text-[41px] leading-[49px]">Your chat id is:
                    <a href="#" class="text-[#53bdeb]"><svg class="inline-block -ml-[6px] align-[-8px] w-[426px] h-[48px]" viewBox="0 0 426 48" fill="#2f5b71" aria-label="hidden">
                            <defs><filter id="smudge" x="-5%" y="-20%" width="110%" height="140%"><feGaussianBlur stdDeviation="4"/></filter></defs>
                            <g filter="url(#smudge)"><path d="M4 12Q10 2 35 8l40 3 115-4 100 6 60-4 60-1 14 12 2 15-70 3-35-3-75 4-55-3-90 2H20Q10 38 8 26z"/><path d="m150 38 35-13 40-3-25 15zM280 35l28-15 40-3-28 20z" fill="#264758"/></g>
                        </svg>@g<br>.us</a>
                </p>
                <span class="absolute right-[22px] bottom-2 text-[31px] leading-[36px] text-[#8696a0]">17:59</span>
            </div>
        </main>

        <form class="relative flex items-center gap-3 pl-3 pr-[11px] pb-[10px]" onsubmit="return false">
            <div class="flex-1 min-w-0 flex items-center h-[117px] pl-[28px] pr-[34px] rounded-full bg-[#1f2c34]">
                <button type="button" aria-label="Emoji" class="shrink-0">
                    <svg class="w-[54px] h-[54px]" viewBox="0 0 54 54" fill="#1f2c34"><circle cx="27" cy="27" r="26" fill="#8696a0"/><ellipse cx="19" cy="20" rx="4" ry="5.500"/><ellipse cx="35.500" cy="20" rx="4" ry="5.500"/><path d="M10 29q17 5 34 0c-1 9-9 15-17 15S11 38 10 29z"/><path d="M14 33q13 3 26 0c-4 5-22 5-26 0z" fill="#8696a0"/></svg>
                </button>
                <input type="text" placeholder="Message" aria-label="Message" class="flex-1 min-w-0 ml-[28px] pt-[2px] bg-transparent outline-none text-[47px] leading-[56px] placeholder:text-[#8696a0]">
                <button type="button" aria-label="Attach" class="shrink-0">
                    <svg class="w-[56px] h-[52px]" viewBox="0 0 56 52" fill="none" stroke="#8696a0" stroke-width="3.800" stroke-linecap="round" stroke-linejoin="round"><path d="M18 19 34 34q4 3 7 0 3-4 0-8L22 8Q14 0 6 6-1 13 6 22L30 44q9 8 18 1 8-9 0-18L30 7"/></svg>
                </button>
                <button type="button" aria-label="Camera" class="shrink-0 ml-[57px]">
                    <svg class="w-[54px] h-[50px]" viewBox="0 0 54 50" fill="#8696a0"><path d="M9 9h4q3 0 5-3 3-4 7-4h6q4 0 6 4 2 3 5 3h3q8 0 8 8v23q0 8-8 8H10q-8 0-8-8V16q0-7 7-7z"/><circle cx="27.500" cy="26.500" r="11" stroke="#1f2c34" stroke-width="4"/></svg>
                </button>
            </div>
            <button type="button" aria-label="Voice message" class="shrink-0 w-[120px] h-[120px] rounded-full bg-[#00a884] flex items-center justify-center shadow-lg">
                <svg class="w-[40px] h-[54px]" viewBox="0 0 40 54" fill="none" stroke="#fff" stroke-width="5" stroke-linecap="round"><rect x="12" y="1" width="16" height="32" rx="8" fill="#fff" stroke="none"/><path d="M4 27c2 20 30 20 32 0M20 42v9"/></svg>
            </button>
        </form>
    </div>
</div>

<script>
    // x, y, radius triples and x, y, scale, rotation quads, in thirds of a pixel from each tile's corner
    const tiles = [
        { at: [0, 0],
          dot: [115,447,18, 233,450,32, 194,538,14, 471,447,16, 721,489,20, 789,518,14, 805,438,23, 907,463,18, 851,549,27, 1001,481,15, 1033,514,12, 1098,455,29, 1232,438,16, 1410,470,12, 1507,460,20, 515,624,15, 591,632,13, 538,675,20, 688,708,27, 822,703,17, 180,666,12, 170,733,22, 276,716,14, 570,740,12, 645,757,13, 308,757,14, 1351,700,13],
          star: [748,622,5.5,12], gear: [591,518,6.4,0], cloud: [957,632,5,-8], heart: [1135,560,5,18], drop: [80,703,2.4,-25], sparkle: [1308,520,6,10, 455,770,4,20] },
        { at: [500, 0],
          dot: [10,460,18, 148,480,29, 251,443,11, 552,505,26, 670,475,14, 605,435,24, 902,503,14, 975,430,25, 1013,504,16, 983,553,16, 803,585,15, 560,573,14, 492,590,13, 230,632,9, 338,666,18, 425,657,14, 511,672,27, 256,705,15, 418,738,21, 682,740,17, 786,688,18, 859,731,26, 1290,441,14, 1282,510,11, 1353,552,20, 1287,640,18, 1347,663,19, 1485,482,13, 1448,743,20],
          star: [1446,615,5.6,12, 1160,450,6,10], sparkle: [903,615,4.6,-10, 1190,760,5,5], cloud: [1148,605,5,0] },
        { at: [0, 240],
          dot: [97,510,12, 207,520,21, 333,520,12, 404,680,27, 728,600,14, 1280,637,15, 722,695,13, 641,720,19, 703,758,20, 429,788,15, 945,743,11, 1299,562,23, 899,820,15, 1118,886,13, 1940,590,15, 2407,518,20, 2753,560,14, 2426,885,14, 2505,882,20, 2715,880,16, 2744,954,14, 2865,1065,13, 2907,1095,16, 2902,1167,22, 2850,1215,13, 2944,1213,14, 2644,1255,13, 2967,1275,17, 2618,971,14, 85,1380,20, 117,245,24, 84,22,13, 1920,20,19, 2184,20,16, 2360,15,24, 2950,20,22, 2925,280,18, 2990,215,22],
          star: [1758,585,8.5,5, 1600,880,5,10, 30,180,7,20], sparkle: [1188,665,8,8, 530,760,6,12, 2140,800,6,0, 50,1240,8,0, 15,580,7,0, 2690,20,5,0], heart: [540,565,7,0, 2852,908,3.4,12, 2932,885,3.4,12], camera: [890,635,11.5,-12], drop: [2290,540,4.5,0] },
        { at: [0, 700],
          dot: [83,0,20, 194,177,15, 42,388,14, 0,497,12, 318,196,9, 388,196,9, 354,215,9, 333,261,9, 607,70,17, 481,290,20, 543,294,19, 853,420,13, 918,394,19, 1446,320,22, 1487,528,20, 337,610,13, 10,690,18, 575,756,13, 746,749,16, 807,745,9, 885,774,30, 964,719,12, 1013,673,16, 1065,690,8, 1149,723,19, 1247,703,22, 1298,771,13, 1211,798,19, 1283,828,13, 1173,879,13, 932,876,14, 863,899,14, 776,860,27, 507,826,31, 435,819,13, 337,818,14, 900,1017,21, 1192,994,12, 899,1082,12, 938,1144,28, 284,1111,16, 662,1221,13, 729,1249,16, 635,1271,13, 865,1227,18, 1083,1176,12, 1156,1160,16, 1176,1223,21, 1225,1275,15, 1403,1263,13, 1344,1286,24, 1491,1265,12, 303,1290,27, 40,1320,25, 665,1333,21, 547,1342,16, 447,1345,16],
          star: [1148,595,7.5,2, 242,710,5.6,12, 424,945,5.2,2], plus: [101,130,5.4,-10], sparkle: [203,1187,7.3,-12], heart: [1045,790,5.8,18], quote: [1065,440,5,-10] },
        { at: [502, 700],
          dot: [483,196,15, 577,182,13, 680,205,20, 138,298,13, 189,325,17, 219,398,30, 127,403,14, 40,493,12, 656,290,13, 674,389,27, 733,429,17, 908,343,20, 852,417,26, 891,491,16, 1080,270,17, 1136,214,23, 1237,365,18, 1356,274,22, 1421,197,15, 1294,423,28, 1351,512,17, 1380,634,12, 332,632,16, 418,634,21, 287,668,14, 614,882,18, 664,929,12, 965,800,15, 908,837,11, 1026,875,24, 1190,901,16, 1356,881,26, 1410,922,13, 976,960,23, 1076,980,28, 1014,1022,12, 1153,993,16, 1465,1010,12, 1411,1070,13, 1453,1145,15, 539,1030,16, 554,1082,11, 530,1141,9, 55,1008,23, 119,1033,17, 204,1090,29, 316,1068,14, 374,1073,18, 71,1112,16, 8,1161,14, 5,915,12, 576,1242,16, 555,1327,22, 923,1093,11, 960,1127,14, 901,1137,9, 1031,1255,12, 1035,1325,16, 1246,1287,23],
          star: [1248,243,5,15, 837,973,5.5,0, 452,1190,5.6,15, 22,382,5.8,10], sparkle: [765,295,4.4,5, 172,690,5.8,12, 1335,766,5.9,8, 1495,890,5.4,5], cloud: [165,540,5,-3], quote: [728,580,4.6,-5], note: [585,650,4.5,-8], camera: [757,775,10.8,7], pin: [457,398,3.7,-5, 1298,965,5,-18] },
        { at: [0, 1150],
          dot: [357,21,14, 402,50,12, 34,94,14, 1008,0,14, 360,335,15, 1092,184,19, 1146,234,14, 1201,247,14, 1302,290,12, 1218,322,27, 1368,315,20, 1170,376,16, 1188,461,25, 1195,552,13, 1154,655,12, 1297,668,27, 1373,665,15, 1461,674,22, 1349,714,11, 1290,761,16, 687,562,16, 758,567,23, 627,605,15, 567,623,14, 596,682,16, 567,750,14, 688,761,18, 362,655,21, 215,708,11, 274,720,17, 338,722,21, 182,765,19, 385,803,15, 464,869,15, 597,961,20, 628,1014,14, 388,1067,13, 106,1001,20, 1369,997,15, 1320,1035,15, 1361,1065,11],
          star: [743,678,5.6,12, 482,1014,7.3,2], sparkle: [242,77,5,-8, 762,228,6,3], note: [585,838,5,8] },
        { at: [502, 1150],
          dot: [119,38,17, 41,126,13, 5,195,20, 390,191,12, 307,211,27, 239,234,14, 91,322,28, 184,301,15, 35,379,14, 213,380,16, 68,431,22, 130,428,8, 252,470,22, 188,517,14, 259,556,20, 1046,31,9, 811,512,20, 582,603,17, 361,715,12, 404,776,15, 442,872,28, 500,857,14, 487,923,16, 727,850,14, 766,880,17, 1257,454,20, 1298,522,26, 1380,509,12, 1258,592,15, 1353,586,14, 1269,653,16, 1273,734,21, 1334,778,10, 1105,903,15, 1202,897,17, 1175,953,11, 1117,986,12, 1151,1064,23, 1454,842,24, 1486,928,10, 163,997,16, 130,1060,21, 305,1105,13],
          heart: [133,200,5.2,15], gear: [502,728,6,0], sparkle: [1155,772,5.8,35] },
        { at: [0, 1510],
          dot: [139,29,15, 231,40,20, 220,115,27, 270,170,19, 139,190,17, 139,371,15, 252,372,21, 447,47,19, 405,88,16, 843,170,22, 818,250,27, 770,303,16, 880,287,15, 776,364,16, 926,504,19, 1355,300,19, 1326,383,26, 1254,414,18, 1299,492,13, 1183,665,13, 1230,699,15, 1226,750,17, 805,659,12, 845,671,12, 73,957,22, 159,968,16, 1041,980,17, 997,1020,14, 1077,1030,15, 724,1105,20, 1462,899,12, 1461,1006,19, 1448,1087,29],
          star: [848,50,5.1,5, 203,1067,5.2,12], heart: [240,262,6.3,5, 1245,877,6.3,5], drop: [82,260,5,-12, 20,355,4,0], sparkle: [1220,560,4.6,-10], pin: [1447,680,3.5,-15] },
        { at: [502, 1510],
          dot: [506,41,12, 420,88,21, 366,177,13, 431,236,16, 795,187,16, 689,230,15, 739,267,14, 820,262,22, 49,337,21, 130,382,26, 111,436,13, 78,494,16, 157,477,16, 482,541,26, 500,628,15, 677,642,16, 670,708,14, 580,715,15, 611,782,26, 214,739,12, 308,890,14, 318,970,17, 381,963,19, 455,936,23, 546,922,15, 295,1023,14, 664,1068,9, 783,863,13, 939,828,23, 983,619,29, 977,744,12, 925,549,16, 896,482,13, 1079,385,15, 1140,389,17, 1282,232,15, 1145,868,20, 1161,962,11, 1158,1035,14, 1222,1031,16, 1225,1102,14, 710,1125,22, 12,1068,19],
          plus: [316,71,5.6,-12], sparkle: [180,567,4.5,5, 995,443,5.9,10], drop: [1280,153,3,20, 1450,150,3.5,-15] },
        { at: [0, 1860], dot: [10,465,12, 80,475,15, 789,465,13, 929,475,13, 1519,17,18, 12,288,14, 0,375,20, 1210,88,15] },
        { at: [600, 1860], dot: [370,17,10, 415,75,23, 930,52,13, 685,108,14, 824,406,10], sparkle: [530,460,4.5,0] }
    ];

    const layer = document.getElementById('doodles');
    let markup = '';
    for (const tile of tiles) {
        const [ox, oy] = tile.at;
        for (const [kind, n] of Object.entries(tile)) {
            if (kind === 'at') continue;
            const step = kind === 'dot' ? 3 : 4;
            for (let i = 0; i < n.length; i += step) {
                const x = ox + n[i] / 3;
                const y = oy + n[i + 1] / 3;
                markup += kind === 'dot'
                    ? `<circle cx="${x}" cy="${y}" r="${n[i + 2] / 3}"/>`
                    : `<use href="#${kind}" transform="translate(${x} ${y}) rotate(${n[i + 3]}) scale(${n[i + 2] / 3})"/>`;
            }
        }
    }
    layer.innerHTML = markup;
</script>

</body>
</html>
